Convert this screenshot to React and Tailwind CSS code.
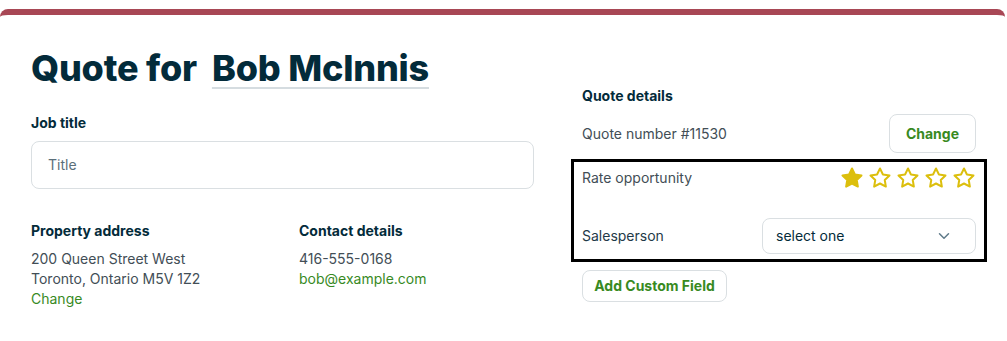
import { ChevronDown } from 'lucide-react'

const STAR = 'M12 2.5l2.94 5.96 6.56.95-4.75 4.63 1.12 6.54L12 17.5l-5.87 3.08 1.12-6.54L2.5 9.41l6.56-.95L12 2.5z'

function Star({ filled }) {
  return (
    <svg width="24" height="24" viewBox="0 0 24 24" className="shrink-0">
      <path
        d={STAR}
        fill={filled ? '#dcbf0d' : 'none'}
        stroke="#dcbf0d"
        strokeWidth="2"
        strokeLinejoin="round"
      />
    </svg>
  )
}

export default function App() {
  return (
    <div className="min-h-[341px] bg-white pt-[9px] font-['Inter','Noto_Sans',sans-serif] text-[14px] leading-[20px] text-[#424e56]">
      <div className="mr-[2px] rounded-t-[8px] border-t-[6px] border-[#a84755] pl-[31px] pr-[29px] pt-[30px]">
        <div className="flex gap-[48px]">
          {/* Left column */}
          <div className="w-[503px]">
            <h1 className="text-[36px] font-extrabold leading-[46px] tracking-[-0.2px] text-[#032b3a]">
              Quote for
              <span className="ml-[15px] underline decoration-[#d5dce0] decoration-2 underline-offset-[6px]">
                Bob McInnis
              </span>
            </h1>

            <div className="mt-[22px] font-bold text-[#032b3a]">Job title</div>
            <div className="mt-[8px] flex h-[48px] items-center rounded-[8px] border border-[#dadfe2] pl-[16px] text-[#5b6f7a]">
              Title
            </div>

            <div className="mt-[32px] grid grid-cols-[268px_1fr]">
              <div>
                <div className="font-bold text-[#032b3a]">Property address</div>
                <div className="mt-[8px]">200 Queen Street West</div>
                <div>Toronto, Ontario M5V 1Z2</div>
                <div className="text-[#388a1f]">Change</div>
              </div>
              <div>
                <div className="font-bold text-[#032b3a]">Contact details</div>
                <div className="mt-[8px]">416-555-0168</div>
                <div className="text-[#388a1f]">bob@example.com</div>
              </div>
            </div>
          </div>

          {/* Right column */}
          <div className="w-[394px] pt-[41px]">
            <div className="font-bold text-[#032b3a]">Quote details</div>
            <div className="mt-[8px] flex items-center justify-between">
              <span>Quote number #11530</span>
              <button className="h-[39px] rounded-[8px] border border-[#dadfe2] px-[16px] font-bold text-[#388a1f]">
                Change
              </button>
            </div>

            <div className="-mx-[11px] mt-[6px] border-[3px] border-black px-[8px] pb-[5px] pt-[4px]">
              <div className="flex items-center justify-between">
                <span>Rate opportunity</span>
                <div className="flex gap-[4px]">
                  <Star filled />
                  <Star />
                  <Star />
                  <Star />
                  <Star />
                </div>
              </div>
              <div className="mt-[28px] flex items-center justify-between">
                <span className="text-[#1f3a48]">Salesperson</span>
                <div className="flex h-[36px] w-[214px] items-center justify-between rounded-[8px] border border-[#dadfe2] pl-[13px] pr-[22px] text-[#032b3a]">
                  <span>select one</span>
                  <ChevronDown size={18} strokeWidth={2} className="text-[#5f7a89]" />
                </div>
              </div>
            </div>

            <button className="mt-[8px] h-[32px] w-[145px] rounded-[8px] border border-[#dadfe2] font-bold text-[#388a1f]">
              Add Custom Field
            </button>
          </div>
        </div>
      </div>
    </div>
  )
}
